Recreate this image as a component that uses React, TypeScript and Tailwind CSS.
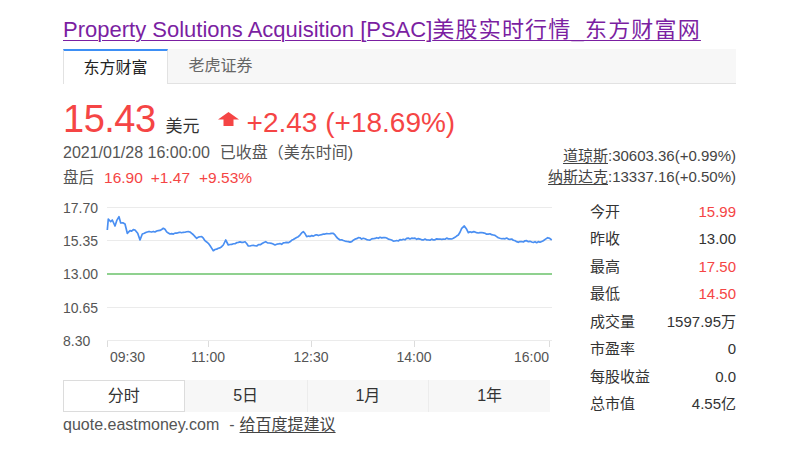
import React from "react";

const RED = "#f54545";

// Key points of the intraday price curve, in page pixel coordinates.
const KEY: [number, number][] = [
  [107.3, 230], [108.3, 219], [110.7, 221.7], [112.3, 220], [115, 226], [116.7, 220.7],
  [119, 216.7], [120.7, 223], [125, 224], [127.3, 233.3], [130, 230.7], [135, 230],
  [137.7, 233.3], [140, 240], [142.3, 234], [148.3, 231.7], [155, 232], [163.3, 228.3],
  [170, 234], [178.3, 232.7], [188.3, 231.7], [191.7, 233.3], [196.7, 238.3], [201.7, 236.7],
  [208.3, 243.3], [213.3, 250.7], [218.3, 248.3], [223.3, 245], [225.7, 240], [228.3, 245],
  [236.7, 242.7], [245, 241.7], [248.3, 246], [256.7, 246], [265.7, 241.7], [275, 245],
  [288.3, 242.7], [298.3, 236.7], [303.3, 231.7], [306.7, 236.7], [320, 235], [333.3, 233.3],
  [340, 240], [351.7, 241.7], [358.3, 237.7], [368.3, 240], [376.7, 237.7], [383.3, 237.7],
  [395, 241], [403.3, 239.3], [413.3, 238.3], [426.7, 240], [440, 239], [453.3, 238.3],
  [458.3, 235], [461.7, 228.3], [464.3, 226], [468.3, 232.7], [473.3, 231.7], [485, 233.3],
  [493.3, 235], [500, 238.3], [511.7, 239], [518.3, 242.3], [526.7, 240.7], [536.7, 242.7],
  [543.3, 240.7], [547.7, 237.7], [551.7, 240],
];

function hash(i: number) {
  const s = Math.sin(i * 12.9898) * 43758.5453;
  return s - Math.floor(s);
}

function buildLine() {
  const pts: string[] = [];
  let n = 0;
  for (let k = 0; k < KEY.length - 1; k++) {
    const [x0, y0] = KEY[k];
    const [x1, y1] = KEY[k + 1];
    pts.push(`${x0},${y0}`);
    const steps = Math.floor((x1 - x0) / 1.6);
    for (let s = 1; s < steps; s++) {
      const t = s / steps;
      const x = x0 + (x1 - x0) * t;
      const y = y0 + (y1 - y0) * t + (hash(n++) - 0.5) * 1.4;
      pts.push(`${x.toFixed(2)},${y.toFixed(2)}`);
    }
  }
  const last = KEY[KEY.length - 1];
  pts.push(`${last[0]},${last[1]}`);
  return pts.join(" ");
}

const LINE = buildLine();

function Chart() {
  const grid = [
    { y: 207.5, label: "17.70" },
    { y: 240.5, label: "15.35" },
    { y: 307.5, label: "10.65" },
    { y: 340.5, label: "8.30" },
  ];
  const ticks = [107.5, 208.5, 311.5, 414.5, 549.5];
  const xLabels: { x: number; t: string; anchor: "start" | "middle" | "end" }[] = [
    { x: 110, t: "09:30", anchor: "start" },
    { x: 208, t: "11:00", anchor: "middle" },
    { x: 311, t: "12:30", anchor: "middle" },
    { x: 414, t: "14:00", anchor: "middle" },
    { x: 549, t: "16:00", anchor: "end" },
  ];
  const font = "'Liberation Sans', Arial, sans-serif";
  return (
    <svg width={490} height={183} viewBox="63 197 490 183" className="block">
      {grid.map((g) => (
        <line key={g.label} x1={107} x2={552} y1={g.y} y2={g.y} stroke="#ebebeb" strokeWidth={1} />
      ))}
      <line x1={107} x2={552} y1={274} y2={274} stroke="#8fd18f" strokeWidth={2} />
      {ticks.map((x) => (
        <line key={x} x1={x} x2={x} y1={341} y2={347} stroke="#dcdcdc" strokeWidth={1} />
      ))}
      {[...grid.slice(0, 2), { y: 274, label: "13.00" }, ...grid.slice(2)].map((g) => (
        <text key={g.label} x={63} y={g.y + 5} fontSize={14} fill="#555" fontFamily={font}>
          {g.label}
        </text>
      ))}
      {xLabels.map((l) => (
        <text key={l.t} x={l.x} y={362} fontSize={14} fill="#555" textAnchor={l.anchor} fontFamily={font}>
          {l.t}
        </text>
      ))}
      <polyline points={LINE} fill="none" stroke="#4a8ff2" strokeWidth={1.7} strokeLinejoin="round" />
    </svg>
  );
}

function UpArrow() {
  return (
    <svg width={21} height={14} viewBox="0 0 21 14" className="block">
      <path d="M10.5 0 L21 7.5 L15.5 7.5 L15.5 14 L5.5 14 L5.5 7.5 L0 7.5 Z" fill={RED} />
    </svg>
  );
}

const STATS: { k: string; v: string; red?: boolean }[] = [
  { k: "今开", v: "15.99", red: true },
  { k: "昨收", v: "13.00" },
  { k: "最高", v: "17.50", red: true },
  { k: "最低", v: "14.50", red: true },
  { k: "成交量", v: "1597.95万" },
  { k: "市盈率", v: "0" },
  { k: "每股收益", v: "0.0" },
  { k: "总市值", v: "4.55亿" },
];

export default function App() {
  return (
    <div className="w-[791px] h-[449px] bg-white overflow-hidden font-['Liberation_Sans','Noto_Sans_CJK_SC',sans-serif] text-[#333]">
      <div className="ml-[63px] w-[673px]">
        <h1 className="pt-[16px] h-[44px] text-[22px] leading-[28px] font-normal whitespace-nowrap">
          <a className="text-[#7b1fa2] underline decoration-1 underline-offset-[3px]">
            Property Solutions Acquisition [PSAC]
            <span className="tracking-[1.2px]">美股实时行情_东方财富网</span>
          </a>
        </h1>

        {/* source tabs */}
        <div className="mt-[5px] flex h-[35px] bg-[#f7f7f7] border-b border-[#e2e2e2]">
          <div className="w-[105px] h-[35px] bg-white border-t-2 border-t-[#3d8ff5] border-x border-x-[#e2e2e2] flex items-center justify-center text-[16px] text-[#222]">
            东方财富
          </div>
          <div className="w-[105px] flex items-center justify-center text-[16px] text-[#666]">
            老虎证券
          </div>
        </div>

        {/* price row */}
        <div className="mt-[16px] h-[38px] flex items-baseline leading-[38px] whitespace-nowrap">
          <span className="text-[38px] text-[#f54545] tracking-[-0.5px]">15.43</span>
          <span className="ml-[10px] text-[17px] text-[#333]">美元</span>
          <span className="ml-[18px] self-start pt-[12px]">
            <UpArrow />
          </span>
          <span className="ml-[8px] text-[28px] text-[#f54545]">+2.43 (+18.69%)</span>
        </div>

        <div className="flex justify-between items-start">
          <div className="mt-[3px]">
            <div className="h-[24px] leading-[24px] text-[16px] text-[#555] whitespace-nowrap">
              2021/01/28 16:00:00<span className="ml-[10px]">已收盘（美东时间)</span>
            </div>
            <div className="h-[25px] leading-[25px] text-[15.5px] whitespace-nowrap">
              <span className="text-[#555]">盘后</span>
              <span className="ml-[10px] text-[#f54545]">16.90</span>
              <span className="ml-[8px] text-[#f54545]">+1.47</span>
              <span className="ml-[9px] text-[#f54545]">+9.53%</span>
            </div>
          </div>
          <div className="mt-[7px] text-right text-[15px] leading-[21px] text-[#444] whitespace-nowrap">
            <div>
              <a className="underline underline-offset-2">道琼斯</a>:30603.36(+0.99%)
            </div>
            <div>
              <a className="underline underline-offset-2">纳斯达克</a>:13337.16(+0.50%)
            </div>
          </div>
        </div>

        {/* chart + stats */}
        <div className="mt-[7px] flex">
          <div className="w-[490px]">
            <Chart />
            <div className="w-[487px] h-[32px] grid grid-cols-4 bg-[#f7f7f7] text-[16px] text-[#333]">
              <div className="bg-white border border-[#dcdcdc] flex items-center justify-center">分时</div>
              <div className="flex items-center justify-center">5日</div>
              <div className="border-l border-[#ececec] flex items-center justify-center">1月</div>
              <div className="border-l border-[#ececec] flex items-center justify-center">1年</div>
            </div>
            <div className="h-[25px] leading-[25px] text-[16px] text-[#555] whitespace-nowrap">
              quote.eastmoney.com<span className="ml-[10px]">-</span>
              <a className="ml-[5px] underline underline-offset-2 text-[#444]">给百度提建议</a>
            </div>
          </div>
          <div className="ml-[37px] w-[146px] pt-[1px]">
            {STATS.map((s) => (
              <div key={s.k} className="h-[27.5px] flex items-center justify-between text-[15px]">
                <span className="text-[#333]">{s.k}</span>
                <span className={s.red ? "text-[#f54545]" : "text-[#333]"}>{s.v}</span>
              </div>
            ))}
          </div>
        </div>
      </div>
    </div>
  );
}
